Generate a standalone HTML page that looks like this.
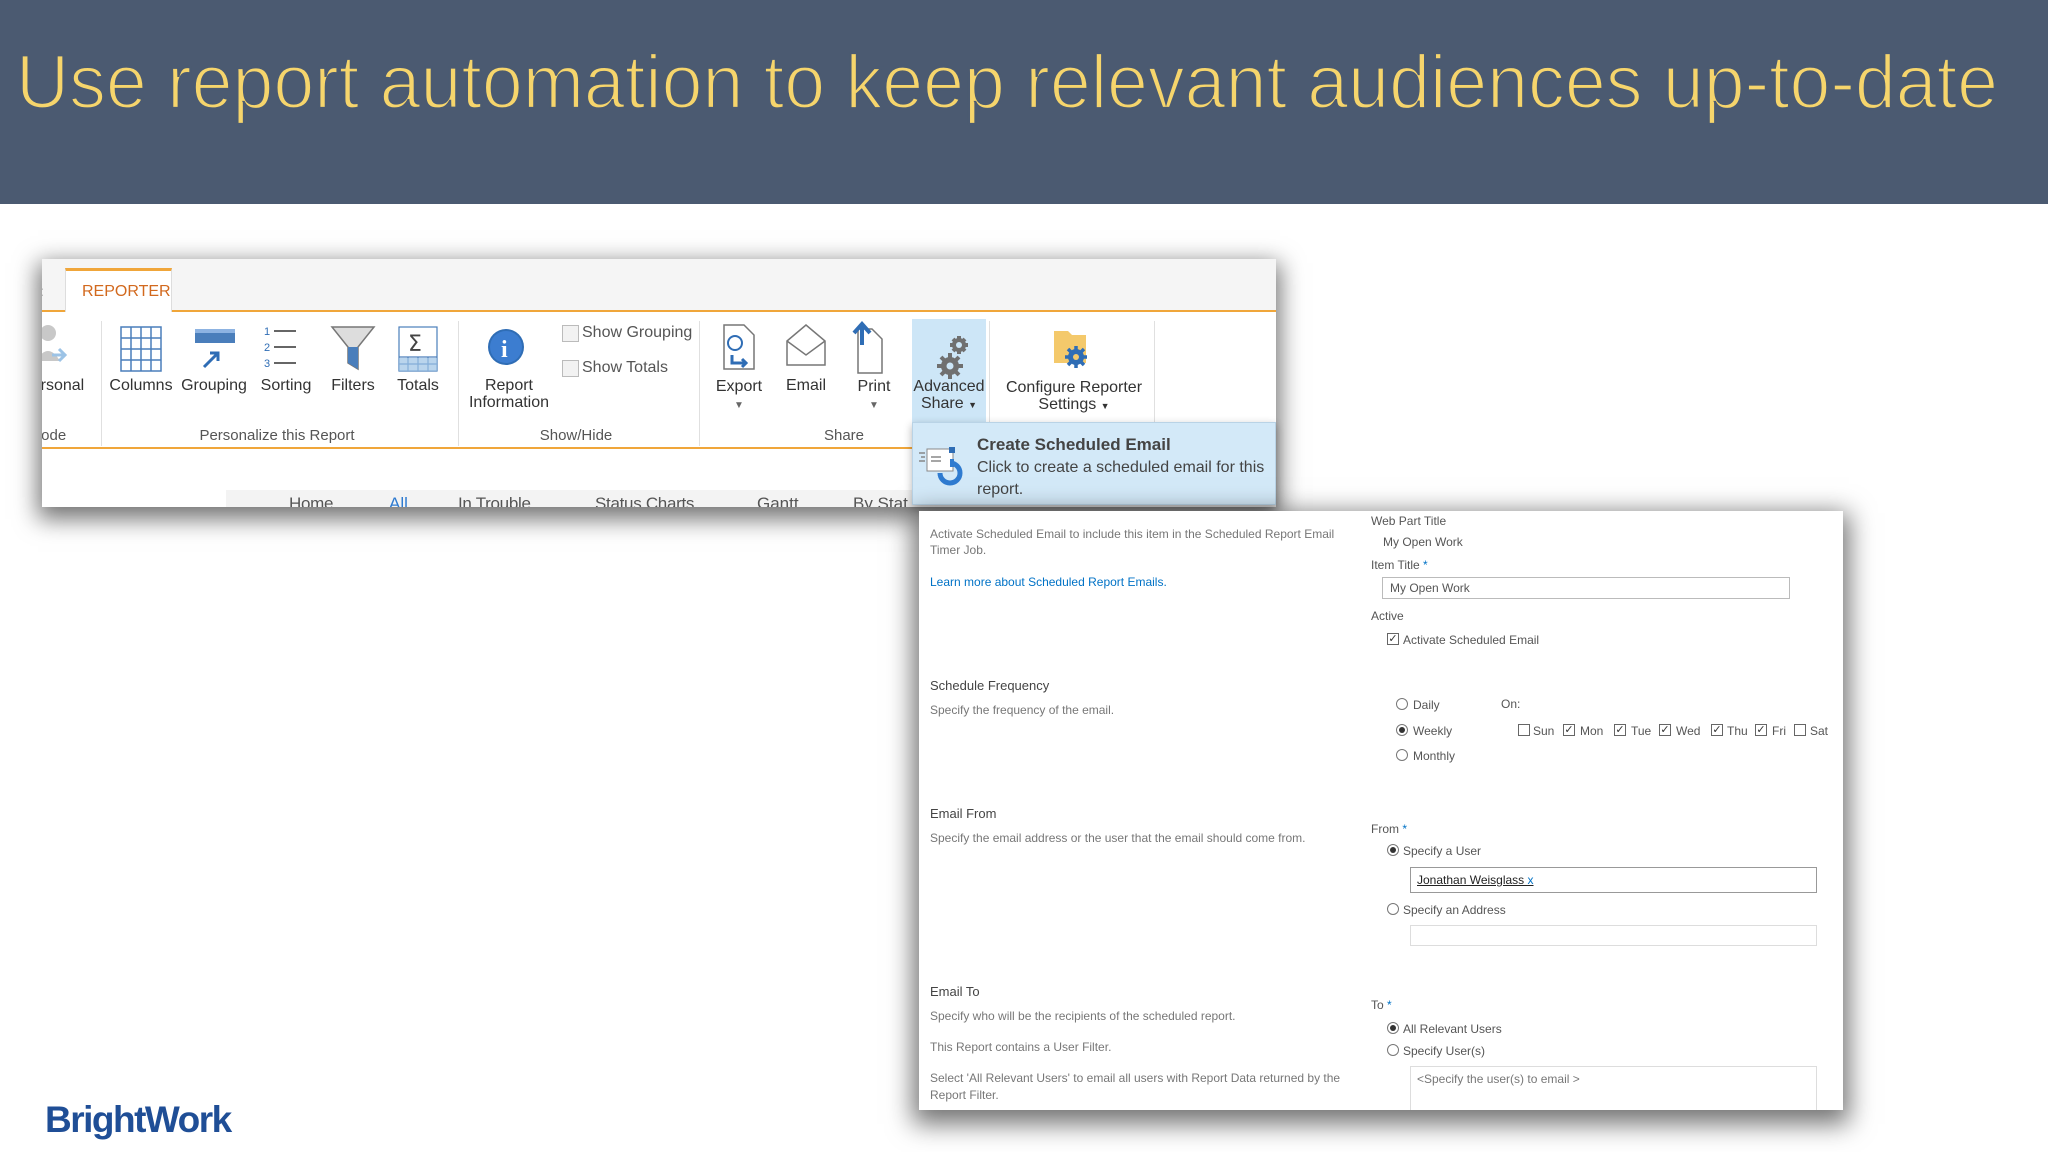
<!DOCTYPE html>
<html><head><meta charset="utf-8"><style>
*{margin:0;padding:0;box-sizing:border-box}
body{width:2048px;height:1152px;overflow:hidden;background:#fff;position:relative;font-family:"Liberation Sans",sans-serif}
.a{position:absolute;white-space:nowrap}
.hdr{position:absolute;left:0;top:0;width:2048px;height:204px;background:#4b5a71}
.rib{position:absolute;left:42px;top:259px;width:1234px;height:248px;background:#fff;box-shadow:0 8px 22px 4px rgba(0,0,0,.55);overflow:hidden}
.lbl{position:absolute;font-size:16px;color:#333;text-align:center;line-height:17px;white-space:nowrap;transform:translateX(-50%)}
.grp{position:absolute;font-size:15px;color:#555;white-space:nowrap;transform:translateX(-50%);top:168px}
.sep{position:absolute;top:62px;width:1px;height:125px;background:#e0e0e0}
.form{position:absolute;left:919px;top:511px;width:924px;height:599px;background:#fff;box-shadow:0 8px 24px 6px rgba(0,0,0,.55);overflow:hidden;font-size:12px;color:#777}
.form .a{line-height:14px}
.h{color:#444;font-size:13px}
.dk{color:#555}
.cb{position:absolute;width:12px;height:12px;border:1px solid #666;background:#fff;font-size:11px;line-height:10px;text-align:center;color:#333}
.rd{position:absolute;width:12px;height:12px;border:1px solid #777;border-radius:50%;background:#fff}
.rd.on::after{content:"";position:absolute;left:2px;top:2px;width:6px;height:6px;border-radius:50%;background:#333}
.inp{position:absolute;border:1px solid #bbb;background:#fff}
</style></head><body>
<div class="hdr"></div>
<svg class="a" style="left:0;top:0" width="2048" height="204"><text x="16" y="108" font-family="Liberation Sans, sans-serif" font-size="76" fill="#f6d56c" stroke="#4b5a71" stroke-width="2.2" textLength="1982" lengthAdjust="spacingAndGlyphs">Use report automation to keep relevant audiences up-to-date</text></svg>

<div class="rib">
  <div class="a" style="left:0;top:0;width:1234px;height:52px;background:#f5f5f5"></div>
  <div class="a" style="left:0;top:51px;width:1234px;height:2px;background:#f0a63a"></div>
  <div class="a" style="left:23px;top:9px;width:107px;height:44px;background:#fff;border:1px solid #ddd;border-top:3px solid #f0a63a;border-bottom:none"></div>
  <div class="a" style="left:40px;top:24px;font-size:16px;color:#d2691e">REPORTER</div>
  <div class="a" style="left:-2px;top:24px;font-size:14px;color:#999">:</div>
  <div class="a" style="left:0;top:188px;width:1234px;height:2px;background:#f0a63a"></div>
  <div class="sep" style="left:59px"></div><div class="sep" style="left:416px"></div><div class="sep" style="left:657px"></div><div class="sep" style="left:947px"></div><div class="sep" style="left:1112px"></div>
  <div class="a" style="left:870px;top:60px;width:74px;height:104px;background:#cde6f7"></div>
  <svg class="a" style="left:0;top:62px" width="1234" height="60">
    <g fill="#c8c8c8"><circle cx="6" cy="12" r="8"/><path d="M-6 40 Q6 20 18 40 Z"/></g><path d="M10 34 h12 M17 28 l6 6 -6 6" stroke="#9cc3e6" stroke-width="3" fill="none"/>
    <g stroke="#4a7ebb" stroke-width="1.5" fill="#fff"><rect x="79" y="6" width="40" height="44"/><path d="M79 17h40M79 28h40M79 39h40M89 6v44M99 6v44M109 6v44"/></g>
    <rect x="153" y="8" width="40" height="14" fill="#4a7ebb"/><rect x="153" y="8" width="40" height="4" fill="#8db3e2"/><path d="M162 46 l14 -14 M168 32 h8 v8" stroke="#2f6db5" stroke-width="3" fill="none"/>
    <g font-size="11" fill="#2f6db5" font-family="Liberation Sans"><text x="222" y="14">1</text><text x="222" y="30">2</text><text x="222" y="46">3</text></g><path d="M232 10h22M232 26h22M232 42h22" stroke="#666" stroke-width="2"/>
    <path d="M290 6 h42 l-16 20 v22 l-10 -6 v-16 Z" fill="#ddd" stroke="#777" stroke-width="1.5"/><path d="M306 26 v16 l10 6 v-22" fill="#4a7ebb"/>
    <g stroke="#4a7ebb" stroke-width="1.2" fill="#fff"><rect x="357" y="6" width="38" height="44"/><path d="M357 36h38M357 43h38M366 36v14M376 36v14M386 36v14"/></g><rect x="357" y="37" width="38" height="13" fill="#9cc3e6" opacity=".7"/><text x="366" y="30" font-size="22" fill="#444" font-family="DejaVu Sans">Σ</text>
    <circle cx="464" cy="26" r="18" fill="#2f6db5"/><circle cx="464" cy="26" r="16" fill="#3c7dd0"/><text x="459" y="36" font-size="24" font-weight="bold" fill="#fff" font-family="Liberation Serif">i</text>
    <path d="M682 4 h20 l10 10 v34 h-30 Z" fill="#fff" stroke="#777" stroke-width="1.5"/><circle cx="693" cy="22" r="7" fill="none" stroke="#2f6db5" stroke-width="2"/><path d="M690 34 v8 h14 M700 38 l4 4 -4 4" stroke="#2f6db5" stroke-width="3" fill="none"/>
    <path d="M745 20 l19 -16 19 16 v24 h-38 Z" fill="#fff" stroke="#777" stroke-width="1.5"/><path d="M745 20 l19 14 19 -14" fill="none" stroke="#777" stroke-width="1.5"/>
    <path d="M816 8 h14 l10 10 v34 h-24 Z" fill="#fff" stroke="#777" stroke-width="1.5"/><path d="M820 24 v-20 M812 12 l8 -9 8 9" stroke="#2f6db5" stroke-width="4" fill="none"/>
    <g fill="#707070"><circle cx="908" cy="45" r="9"/><circle cx="917" cy="24" r="7"/></g><g stroke="#707070" stroke-width="4"><path d="M908 32v26M895 45h26M899 36l18 18M917 36l-18 18M917 15v18M908 24h18M911 18l12 12M923 18l-12 12"/></g><circle cx="908" cy="45" r="3.5" fill="#cde6f7"/><circle cx="917" cy="24" r="3" fill="#cde6f7"/>
    <path d="M1012 10 h14 l4 4 h14 v28 h-32 Z" fill="#f4c96b"/><circle cx="1034" cy="36" r="8" fill="#2f6db5"/><g stroke="#2f6db5" stroke-width="3.5"><path d="M1034 25v22M1023 36h22M1026 28l16 16M1042 28l-16 16"/></g><circle cx="1034" cy="36" r="3" fill="#f4c96b"/>
  </svg>
  <div class="lbl" style="left:16px;top:118px">ersonal</div>
  <div class="lbl" style="left:99px;top:118px">Columns</div>
  <div class="lbl" style="left:172px;top:118px">Grouping</div>
  <div class="lbl" style="left:244px;top:118px">Sorting</div>
  <div class="lbl" style="left:311px;top:118px">Filters</div>
  <div class="lbl" style="left:376px;top:118px">Totals</div>
  <div class="lbl" style="left:467px;top:118px">Report<br>Information</div>
  <div class="cb" style="left:520px;top:66px;width:17px;height:17px;border-color:#bbb;background:#f2f2f2"></div>
  <div class="a" style="left:540px;top:65px;font-size:16px;color:#555">Show Grouping</div>
  <div class="cb" style="left:520px;top:101px;width:17px;height:17px;border-color:#bbb;background:#f2f2f2"></div>
  <div class="a" style="left:540px;top:100px;font-size:16px;color:#555">Show Totals</div>
  <div class="lbl" style="left:697px;top:119px">Export</div><div class="lbl" style="left:697px;top:138px;font-size:10px;color:#666">▼</div>
  <div class="lbl" style="left:764px;top:118px">Email</div>
  <div class="lbl" style="left:832px;top:119px">Print</div><div class="lbl" style="left:832px;top:138px;font-size:10px;color:#666">▼</div>
  <div class="lbl" style="left:907px;top:119px">Advanced<br>Share <span style="font-size:9px">▼</span></div>
  <div class="lbl" style="left:1032px;top:120px">Configure Reporter<br>Settings <span style="font-size:9px">▼</span></div>
  <div class="grp" style="left:10px">lode</div>
  <div class="grp" style="left:235px">Personalize this Report</div>
  <div class="grp" style="left:534px">Show/Hide</div>
  <div class="grp" style="left:802px">Share</div>
  <div class="a" style="left:184px;top:231px;width:1100px;height:30px;background:#f3f3f3"></div>
  <div class="a" style="left:247px;top:235px;font-size:17px;color:#555;letter-spacing:-0.3px">Home</div>
  <div class="a" style="left:347px;top:235px;font-size:17px;color:#2f7bd0">All</div>
  <div class="a" style="left:416px;top:235px;font-size:17px;color:#555;letter-spacing:-0.3px">In Trouble</div>
  <div class="a" style="left:553px;top:235px;font-size:17px;color:#555;letter-spacing:-0.3px">Status Charts</div>
  <div class="a" style="left:715px;top:235px;font-size:17px;color:#555">Gantt</div>
  <div class="a" style="left:811px;top:235px;font-size:17px;color:#555">By Stat</div>
</div>

<div class="a" style="left:912px;top:422px;width:364px;height:83px;background:#d3e9f8;border:1px solid #b9d3e6;box-shadow:0 3px 8px rgba(0,0,0,.3)">
  <svg class="a" style="left:6px;top:22px" width="50" height="44"><path d="M8 4h26v22H8z" fill="#fff" stroke="#888"/><path d="M0 8h6M2 12h4M0 16h6M12 12h10M12 16h10" stroke="#888" stroke-width="1.5"/><rect x="30" y="2" width="6" height="6" fill="#2f6db5"/><path d="M31 18 a10 10 0 1 1 -10 10" stroke="#2f7bd0" stroke-width="5" fill="none"/><path d="M33 14 v8" stroke="#2f7bd0" stroke-width="4"/></svg>
  <div class="a" style="left:64px;top:12px;font-size:17px;font-weight:bold;color:#444">Create Scheduled Email</div>
  <div class="a" style="left:64px;top:36px;font-size:16px;color:#444">Click to create a scheduled email for this</div>
  <div class="a" style="left:64px;top:58px;font-size:16px;color:#444">report.</div>
</div>

<div class="form">
  <div class="a" style="left:11px;top:16px">Activate Scheduled Email to include this item in the Scheduled Report Email</div>
  <div class="a" style="left:11px;top:32px">Timer Job.</div>
  <div class="a" style="left:11px;top:64px;color:#0072c6">Learn more about Scheduled Report Emails.</div>
  <div class="a h" style="left:11px;top:168px">Schedule Frequency</div>
  <div class="a" style="left:11px;top:192px">Specify the frequency of the email.</div>
  <div class="a h" style="left:11px;top:296px">Email From</div>
  <div class="a" style="left:11px;top:320px">Specify the email address or the user that the email should come from.</div>
  <div class="a h" style="left:11px;top:474px">Email To</div>
  <div class="a" style="left:11px;top:498px">Specify who will be the recipients of the scheduled report.</div>
  <div class="a" style="left:11px;top:529px">This Report contains a User Filter.</div>
  <div class="a" style="left:11px;top:560px">Select 'All Relevant Users' to email all users with Report Data returned by the</div>
  <div class="a" style="left:11px;top:577px">Report Filter.</div>

  <div class="a dk" style="left:452px;top:3px">Web Part Title</div>
  <div class="a dk" style="left:464px;top:24px">My Open Work</div>
  <div class="a dk" style="left:452px;top:47px">Item Title <span style="color:#0072c6">*</span></div>
  <div class="inp" style="left:463px;top:66px;width:408px;height:22px"></div>
  <div class="a dk" style="left:471px;top:70px">My Open Work</div>
  <div class="a dk" style="left:452px;top:98px">Active</div>
  <div class="cb" style="left:468px;top:122px">✓</div>
  <div class="a dk" style="left:484px;top:122px">Activate Scheduled Email</div>

  <div class="rd" style="left:477px;top:187px"></div><div class="a dk" style="left:494px;top:187px">Daily</div>
  <div class="rd on" style="left:477px;top:213px"></div><div class="a dk" style="left:494px;top:213px">Weekly</div>
  <div class="rd" style="left:477px;top:238px"></div><div class="a dk" style="left:494px;top:238px">Monthly</div>
  <div class="a dk" style="left:582px;top:186px">On:</div>
  <div class="cb" style="left:599px;top:213px"></div><div class="a dk" style="left:614px;top:213px">Sun</div>
  <div class="cb" style="left:644px;top:213px">✓</div><div class="a dk" style="left:661px;top:213px">Mon</div>
  <div class="cb" style="left:695px;top:213px">✓</div><div class="a dk" style="left:712px;top:213px">Tue</div>
  <div class="cb" style="left:740px;top:213px">✓</div><div class="a dk" style="left:757px;top:213px">Wed</div>
  <div class="cb" style="left:792px;top:213px">✓</div><div class="a dk" style="left:808px;top:213px">Thu</div>
  <div class="cb" style="left:836px;top:213px">✓</div><div class="a dk" style="left:853px;top:213px">Fri</div>
  <div class="cb" style="left:875px;top:213px"></div><div class="a dk" style="left:891px;top:213px">Sat</div>

  <div class="a dk" style="left:452px;top:311px">From <span style="color:#0072c6">*</span></div>
  <div class="rd on" style="left:468px;top:333px"></div><div class="a dk" style="left:484px;top:333px">Specify a User</div>
  <div class="inp" style="left:491px;top:356px;width:407px;height:26px;border-color:#999"></div>
  <div class="a" style="left:498px;top:362px;color:#222;text-decoration:underline">Jonathan Weisglass <span style="color:#0072c6;text-decoration:none">x</span></div>
  <div class="rd" style="left:468px;top:392px"></div><div class="a dk" style="left:484px;top:392px">Specify an Address</div>
  <div class="inp" style="left:491px;top:414px;width:407px;height:21px;border-color:#ddd"></div>

  <div class="a dk" style="left:452px;top:487px">To <span style="color:#0072c6">*</span></div>
  <div class="rd on" style="left:468px;top:511px"></div><div class="a dk" style="left:484px;top:511px">All Relevant Users</div>
  <div class="rd" style="left:468px;top:533px"></div><div class="a dk" style="left:484px;top:533px">Specify User(s)</div>
  <div class="inp" style="left:491px;top:555px;width:407px;height:60px;border-color:#ddd"></div>
  <div class="a" style="left:498px;top:561px">&lt;Specify the user(s) to email &gt;</div>
</div>

<div class="a" style="left:45px;top:1099px;font-size:37px;font-weight:bold;color:#1f4e96;letter-spacing:-1.5px">BrightWork</div>
</body></html>
